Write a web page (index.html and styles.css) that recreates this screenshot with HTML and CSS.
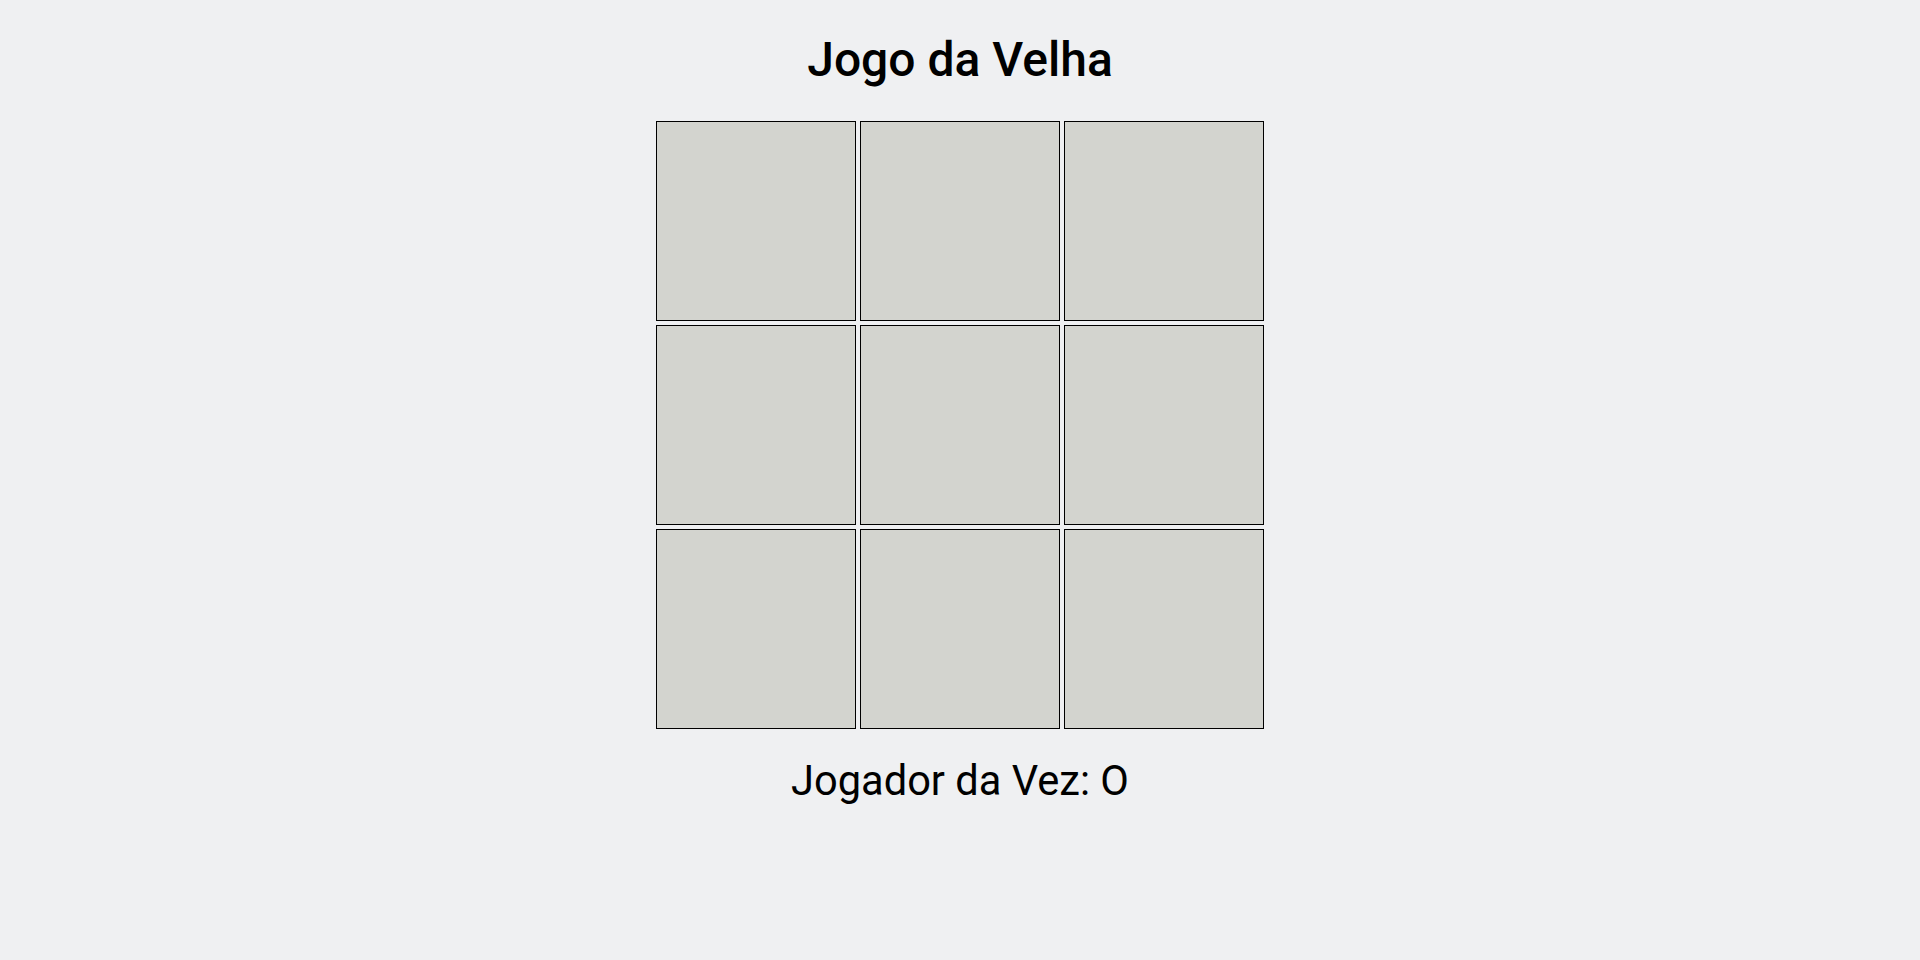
FILE: index.html
```html
<!DOCTYPE html>
<html lang="pt-BR">
<head>
<meta charset="utf-8">
<title>Jogo da Velha</title>
<link rel="stylesheet" href="styles.css">
</head>
<body>
<main class="game">
  <h1 class="title">Jogo da Velha</h1>
  <div class="board">
    <div class="cell"></div>
    <div class="cell"></div>
    <div class="cell"></div>
    <div class="cell"></div>
    <div class="cell"></div>
    <div class="cell"></div>
    <div class="cell"></div>
    <div class="cell"></div>
    <div class="cell"></div>
  </div>
  <p class="turn">Jogador da Vez: O</p>
</main>
</body>
</html>
```

FILE: styles.css
```css
html, body {
  margin: 0;
  padding: 0;
}

body {
  background: #eff0f2;
  color: #000;
  font-family: Roboto, "Noto Sans", sans-serif;
  min-height: 960px;
}

.game {
  display: flex;
  flex-direction: column;
  align-items: center;
  padding-top: 32px;
}

.title {
  margin: 0;
  font-size: 48px;
  font-weight: 500;
  line-height: 56px;
}

.board {
  margin-top: 33px;
  display: grid;
  grid-template-columns: repeat(3, 200px);
  grid-template-rows: repeat(3, 200px);
  gap: 4px;
}

.cell {
  box-sizing: border-box;
  background: #d3d4cf;
  border: 1px solid #000;
}

.turn {
  margin: 28px 0 0;
  font-size: 41.6px;
  font-weight: 400;
  line-height: 1.172;
}
```
